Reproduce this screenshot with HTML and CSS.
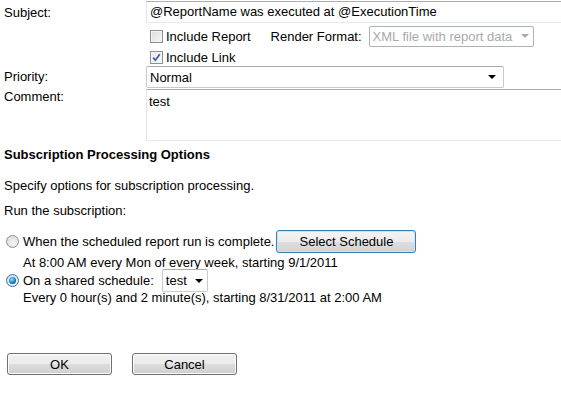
FILE: index.html
```html
<!DOCTYPE html>
<html>
<head>
<meta charset="utf-8">
<link rel="stylesheet" href="styles.css">
</head>
<body>
<div class="page">
  <div class="form">
    <div class="row r-subject">
      <div class="label">Subject:</div>
      <div class="field"><div class="textbox wide">@ReportName was executed at @ExecutionTime</div></div>
    </div>
    <div class="row r-opts">
      <div class="label"></div>
      <div class="field opts">
        <span class="check"></span><span class="ctext">Include Report</span>
        <span class="rf">Render Format:</span>
        <div class="select disabled rfsel"><span class="stext">XML file with report data</span><span class="arrow"></span></div>
      </div>
    </div>
    <div class="row r-link">
      <div class="label"></div>
      <div class="field opts">
        <span class="check checked"><svg viewBox="0 0 11 11" width="11" height="11"><path d="M2.2 5.6 L4.4 8.2 L8.8 2.2" fill="none" stroke="#3a5f9e" stroke-width="1.7"/></svg></span><span class="ctext">Include Link</span>
      </div>
    </div>
    <div class="row r-priority">
      <div class="label">Priority:</div>
      <div class="field"><div class="select prisel"><span class="stext">Normal</span><span class="arrow"></span></div></div>
    </div>
    <div class="row r-comment">
      <div class="label">Comment:</div>
      <div class="field"><div class="textarea wide">test</div></div>
    </div>
  </div>

  <div class="section">
    <div class="heading">Subscription Processing Options</div>
    <div class="para p1">Specify options for subscription processing.</div>
    <div class="para p2">Run the subscription:</div>

    <div class="radiorow rr1">
      <span class="radio"></span><span>When the scheduled report run is complete.</span>
      <button class="btn sched">Select Schedule</button>
    </div>
    <div class="sub s1">At 8:00 AM every Mon of every week, starting 9/1/2011</div>
    <div class="radiorow rr2">
      <span class="radio on"><span class="dot"></span></span><span>On a shared schedule:</span>
      <div class="select testsel"><span class="stext">test</span><span class="arrow"></span></div>
    </div>
    <div class="sub s2">Every 0 hour(s) and 2 minute(s), starting 8/31/2011 at 2:00 AM</div>
  </div>

  <div class="buttons">
    <button class="btn action">OK</button>
    <button class="btn action">Cancel</button>
  </div>
</div>
</body>
</html>
```
FILE: styles.css
```css
html, body {
  margin: 0;
  padding: 0;
  background: #ffffff;
  overflow: hidden;
}
body {
  width: 561px;
  height: 403px;
  font-family: "Liberation Sans", Arial, sans-serif;
  font-size: 13px;
  color: #000;
}
.page {
  display: flex;
  flex-direction: column;
}
.form {
  display: flex;
  flex-direction: column;
}
.row {
  display: flex;
}
.label {
  width: 142px;
  padding-left: 4px;
  flex: none;
}
.field {
  flex: 1;
  min-width: 0;
}
.r-subject { height: 23px; padding-top: 1px; align-items: flex-start; }
.r-subject .label { line-height: 22px; padding-top: 1px; }
.textbox {
  box-sizing: border-box;
  height: 22px;
  line-height: 19px;
  padding-left: 3px;
  border: 1px solid #e2e3ea;
  border-top-color: #abadb3;
  border-bottom-color: #e3e9ef;
  border-right: none;
  white-space: nowrap;
}
.wide { width: 420px; }
.r-opts { height: 22px; margin-top: 1px; }
.opts {
  display: flex;
  align-items: center;
}
.check {
  box-sizing: border-box;
  width: 13px;
  height: 13px;
  margin-left: 4px;
  margin-right: 3px;
  border: 1px solid #8f8f8f;
  background: linear-gradient(135deg, #dcdcdc, #f6f6f6);
  box-shadow: inset 0 0 0 1px #f4f4f4;
  display: flex;
  align-items: center;
  justify-content: center;
}
.check.checked { background: linear-gradient(135deg, #e4e8ee, #f8f9fb); }
.check svg { display: block; }
.rf { margin-left: 20px; }
.select {
  box-sizing: border-box;
  display: flex;
  align-items: center;
  border: 1px solid #c9cacd;
  border-top-color: #acacac;
  border-radius: 2px;
  background: #fff;
  white-space: nowrap;
}
.stext { flex: 1; padding-left: 3px; }
.arrow {
  width: 0;
  height: 0;
  border-left: 4px solid transparent;
  border-right: 4px solid transparent;
  border-top: 4px solid #000;
  margin-right: 4px;
}
.rfsel {
  width: 165px;
  height: 21px;
  margin-left: 7px;
  color: #a9a9a9;
  border-color: #adb2b5;
}
.rfsel .arrow { border-top-color: #a9a9a9; }
.r-link { height: 20px; }
.r-priority { height: 22px; margin-top: -1px; }
.r-priority .label { line-height: 21px; }
.prisel { width: 358px; height: 22px; }
.prisel .arrow { margin-right: 7px; }
.r-comment { margin-top: 1px; }
.r-comment .label { line-height: 15px; padding-top: 0; }
.textarea {
  box-sizing: border-box;
  height: 52px;
  padding: 3px 0 0 2px;
  line-height: 17px;
  border: 1px solid #e2e3ea;
  border-top-color: #abadb3;
  border-bottom-color: #e3e9ef;
  border-right: none;
}
.section {
  padding-left: 4px;
  display: flex;
  flex-direction: column;
}
.heading {
  font-weight: bold;
  margin-top: 6px;
  line-height: 16px;
}
.p1 { margin-top: 15px; line-height: 16px; }
.p2 { margin-top: 9px; line-height: 16px; }
.radiorow {
  display: flex;
  align-items: center;
  height: 23px;
}
.rr1 { margin-top: 11px; }
.radio {
  box-sizing: border-box;
  width: 13px;
  height: 13px;
  border-radius: 50%;
  border: 1px solid #8e8f8f;
  background: radial-gradient(circle at 60% 65%, #f4f4f4, #d6d6d6);
  margin-left: 2px;
  margin-right: 4px;
  display: flex;
  align-items: center;
  justify-content: center;
}
.radio.on { border-color: #3f6e9c; background: radial-gradient(circle at 60% 65%, #f1f6fb, #c7d8ea); }
.dot {
  width: 7px;
  height: 7px;
  border-radius: 50%;
  background: radial-gradient(circle at 40% 35%, #8fe0ff, #1a7ab8 55%, #0d3f70);
}
.btn {
  font-family: "Liberation Sans", Arial, sans-serif;
  font-size: 13px;
  color: #000;
  box-sizing: border-box;
  border: 1px solid #707070;
  border-radius: 3px;
  background: linear-gradient(#f2f2f2 0%, #ebebeb 50%, #dddddd 51%, #cfcfcf 100%);
  box-shadow: inset 0 0 0 1px #fcfcfc;
  padding: 0;
}
.sched {
  width: 140px;
  height: 23px;
  margin-left: 2px;
  border-color: #3c7fb1;
  background: linear-gradient(#f4f4f4 0%, #ececec 50%, #dfdfdf 51%, #d2d2d2 100%);
  box-shadow: inset 0 0 0 1px #c6e6f8;
}
.sub {
  padding-left: 19px;
  line-height: 16px;
}
.s1 { margin-top: 2px; margin-bottom: -2px; }
.s2 { margin-top: -2px; }
.testsel {
  width: 46px;
  height: 23px;
  margin-left: 8px;
}
.buttons {
  display: flex;
  margin-top: 47px;
  padding-left: 7px;
  gap: 20px;
}
.action {
  width: 105px;
  height: 22px;
}
```
